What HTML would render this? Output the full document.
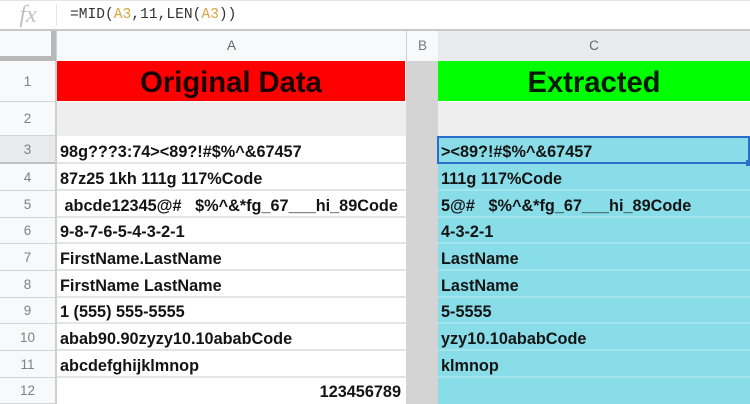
<!DOCTYPE html>
<html><head><meta charset="utf-8">
<style>
html,body{margin:0;padding:0;background:#fff}
#p{position:relative;width:750px;height:404px;overflow:hidden;background:#fff;font-family:"Liberation Sans",sans-serif;color:#141414}
#p div{position:absolute;box-sizing:border-box;white-space:pre}
.rh{left:0;width:55px;text-align:center;color:#808080;font-size:13.5px;background:#f8f9fa;border-bottom:1px solid #d4d4d4}
.a{left:57px;width:349px;background:#fff;border-bottom:2px solid #e4e4e4;font-weight:bold;font-size:16.25px;padding-left:3px}
.b{left:406px;width:32px;background:#d4d4d4}
.c{left:438px;width:312px;background:#88dde8;border-bottom:2px solid #a4e4ec;font-weight:bold;font-size:16.25px;padding-left:3px}
</style></head><body>
<div id="p">
<div style="left:0;top:0;width:750px;height:1px;background:#e4e4e4"></div>
<div style="left:16px;top:1px;width:24px;height:29px;line-height:28px;font-family:'Liberation Serif',serif;font-style:italic;font-size:24px;color:#c0c0c0;text-align:center">fx</div>
<div style="left:56px;top:4px;width:1px;height:21px;background:#e4e4e4"></div>
<div style="left:70px;top:1px;height:29px;line-height:29px;font-family:'Liberation Mono',monospace;font-size:14.6px;color:#333">=MID(<span style="color:#d9a441">A3</span>,11,LEN(<span style="color:#d9a441">A3</span>))</div>
<div style="left:0;top:29px;width:750px;height:2px;background:#c8c8c8"></div>

<div style="left:0;top:31px;width:56px;height:30px;background:#f8f9fa;border-right:5px solid #b8b8b8;border-bottom:5px solid #b8b8b8"></div>
<div style="left:56px;top:31px;width:350px;height:30px;line-height:29px;background:#f8f9fa;color:#666;font-size:13.5px;text-align:center;border-left:1px solid #d0d0d0">A</div>
<div style="left:406px;top:31px;width:32px;height:30px;line-height:29px;background:#f8f9fa;color:#777;font-size:13.5px;text-align:center;border-left:1px solid #d0d0d0">B</div>
<div style="left:438px;top:31px;width:312px;height:30px;line-height:29px;background:#e8eaed;color:#666;font-size:13.5px;text-align:center">C</div>

<div class="rh" style="top:61px;height:41px;line-height:41px">1</div>
<div class="rh" style="top:102px;height:34px;line-height:34px">2</div>
<div class="rh" style="top:136px;height:28px;line-height:28px;width:56px;padding-right:1px;background:#e8eaed;border-bottom:2px solid #c0c0c0">3</div>
<div class="rh" style="top:164px;height:27px;line-height:27px">4</div>
<div class="rh" style="top:191px;height:27px;line-height:27px">5</div>
<div class="rh" style="top:218px;height:26px;line-height:26px">6</div>
<div class="rh" style="top:244px;height:27px;line-height:27px">7</div>
<div class="rh" style="top:271px;height:27px;line-height:27px">8</div>
<div class="rh" style="top:298px;height:26px;line-height:26px">9</div>
<div class="rh" style="top:324px;height:27px;line-height:27px">10</div>
<div class="rh" style="top:351px;height:27px;line-height:27px">11</div>
<div class="rh" style="top:378px;height:26px;line-height:26px">12</div>
<div style="left:55px;top:61px;width:2px;height:343px;background:#d0d0d0"></div>

<div style="left:57px;top:61px;width:348px;height:40px;line-height:45px;background:#ff0000;color:#1a0000;font-weight:bold;font-size:29.2px;text-align:center">Original Data</div>
<div style="left:57px;top:102px;width:349px;height:34px;background:#eeeeee"></div>
<div class="b" style="top:61px;height:343px"></div>
<div style="left:438px;top:61px;width:312px;height:40px;line-height:45px;background:#00ff00;color:#001a00;font-weight:bold;font-size:29.2px;text-align:center">Extracted</div>
<div style="left:438px;top:102px;width:312px;height:34px;background:#eeeeee"></div>

<div class="a" style="top:137px;height:27px;line-height:30px">98g???3:74&gt;&lt;89?!#$%^&amp;67457</div>
<div class="a" style="top:164px;height:27px;line-height:30px">87z25 1kh 111g 117%Code</div>
<div class="a" style="top:191px;height:27px;line-height:30px"> abcde12345@#   $%^&amp;*fg_67___hi_89Code</div>
<div class="a" style="top:218px;height:26px;line-height:28px">9-8-7-6-5-4-3-2-1</div>
<div class="a" style="top:244px;height:27px;line-height:30px">FirstName.LastName</div>
<div class="a" style="top:271px;height:27px;line-height:30px">FirstName LastName</div>
<div class="a" style="top:298px;height:26px;line-height:28px">1 (555) 555-5555</div>
<div class="a" style="top:324px;height:27px;line-height:30px">abab90.90zyzy10.10ababCode</div>
<div class="a" style="top:351px;height:27px;line-height:30px">abcdefghijklmnop</div>
<div class="a" style="top:378px;height:26px;line-height:28px;text-align:right;padding:0 5px 0 0;border:0">123456789</div>

<div class="c" style="top:137px;height:27px;line-height:30px">&gt;&lt;89?!#$%^&amp;67457</div>
<div class="c" style="top:164px;height:27px;line-height:30px">111g 117%Code</div>
<div class="c" style="top:191px;height:27px;line-height:30px">5@#   $%^&amp;*fg_67___hi_89Code</div>
<div class="c" style="top:218px;height:26px;line-height:28px">4-3-2-1</div>
<div class="c" style="top:244px;height:27px;line-height:30px">LastName</div>
<div class="c" style="top:271px;height:27px;line-height:30px">LastName</div>
<div class="c" style="top:298px;height:26px;line-height:28px">5-5555</div>
<div class="c" style="top:324px;height:27px;line-height:30px">yzy10.10ababCode</div>
<div class="c" style="top:351px;height:27px;line-height:30px">klmnop</div>
<div class="c" style="top:378px;height:26px;border:0"></div>

<div style="left:437px;top:136px;width:313px;height:28px;border:2px solid #2a6fc9"></div>
<div style="left:746px;top:160px;width:4px;height:6px;background:#2a6fc9"></div>
</div>
</body></html>
